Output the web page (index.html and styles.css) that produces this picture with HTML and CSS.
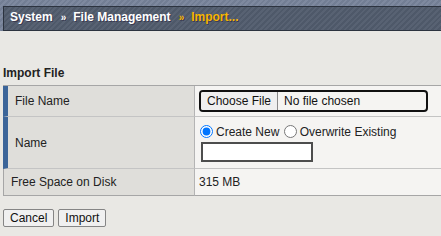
FILE: index.html
```html
<!DOCTYPE html>
<html lang="en">
<head>
    <meta charset="UTF-8">
    <title>Import File</title>
    <link rel="stylesheet" href="styles.css">
</head>
<body>
    <div class="masthead">
        <div class="crumbs">
            <span>System</span><span class="sep">»</span><span>File Management</span><span class="sep current">»</span><span class="current">Import...</span>
        </div>
    </div>

    <div class="content">
        <h2 class="section-title">Import File</h2>

        <table class="props">
            <tr>
                <td class="label required">File Name</td>
                <td class="value file-cell"><input type="file" class="file-input"></td>
            </tr>
            <tr>
                <td class="label required">Name</td>
                <td class="value name-cell">
                    <div class="radio-row">
                        <label><input type="radio" name="mode" checked>Create New</label>
                        <label><input type="radio" name="mode">Overwrite Existing</label>
                    </div>
                    <input type="text" class="text-input">
                </td>
            </tr>
            <tr>
                <td class="label">Free Space on Disk</td>
                <td class="value">315 MB</td>
            </tr>
        </table>

        <div class="actions">
            <button class="btn">Cancel</button>
            <button class="btn">Import</button>
        </div>
    </div>
</body>
</html>
```

FILE: styles.css
```css
html, body {
    margin: 0;
    padding: 0;
}
body {
    font-family: "Liberation Sans", Arial, sans-serif;
    font-size: 12px;
    color: #222;
    background-color: #e9e8e4;
}
.masthead {
    padding: 6px 0 0 3px;
    background-color: #77839a;
    background-image: repeating-linear-gradient(135deg, rgba(255,255,255,0.05) 0 2px, rgba(0,0,0,0.04) 2px 4px);
}
.crumbs {
    height: 20px;
    line-height: 20px;
    padding: 0 0 3px 6px;
    border-top: 1px solid #2c333f;
    border-bottom: 1px solid #2c333f;
    border-left: 1px solid #2c333f;
    background-color: #515c6d;
    background-image: repeating-linear-gradient(135deg, rgba(255,255,255,0.04) 0 2px, rgba(0,0,0,0.04) 2px 4px);
    color: #fff;
    font-weight: bold;
    white-space: nowrap;
    text-shadow: 1px 1px 0 rgba(40, 30, 60, 0.6);
}
.crumbs .sep {
    margin: 0 7px 0 8px;
    font-size: 10px;
}
.crumbs .current {
    color: #f6b500;
}
.content {
    padding-left: 3px;
}
.section-title {
    margin: 35px 0 5px;
    font-size: 12px;
    line-height: 14px;
    font-weight: bold;
    color: #222;
}
.props {
    width: 100%;
    border-collapse: separate;
    border-spacing: 0;
    border-top: 1px solid #a6a6a6;
}
.props td {
    box-sizing: border-box;
    border-bottom: 1px solid #c4c4c4;
    line-height: 14px;
}
.props tr:last-child td {
    border-bottom-color: #a6a6a6;
}
.label {
    width: 192px;
    padding: 6px 7px;
    background-color: #dfdeda;
    border-left: 1px solid #a6a6a6;
    border-right: 1px solid #b4b4b4;
    vertical-align: middle;
}
.label.required {
    border-left: 5px solid #3c6599;
}
.value {
    padding: 6px 4px;
    background-color: #f5f4f2;
}
.file-cell {
    padding-top: 4px;
    padding-bottom: 4px;
}
.file-input {
    box-sizing: border-box;
    width: 229px;
    height: 22px;
    margin: 0;
    padding: 0;
    border: 2px solid #111;
    border-radius: 4px;
    background: transparent;
    font: inherit;
    color: #111;
    vertical-align: top;
}
.file-input::file-selector-button {
    height: 18px;
    margin: 0 6px 0 0;
    padding: 0 6px;
    border: 0;
    border-right: 1px solid #8a8a8a;
    background-color: #efefef;
    font: inherit;
    color: #111;
}
.name-cell {
    padding-bottom: 6px;
}
.radio-row {
    height: 16px;
    margin-top: 1px;
    line-height: 16px;
    white-space: nowrap;
}
.radio-row input {
    width: 13px;
    height: 13px;
    margin: 0 3px 0 1px;
    vertical-align: -2px;
}
.text-input {
    display: block;
    box-sizing: border-box;
    width: 112px;
    height: 20px;
    margin: 2px 0 0 2px;
    padding: 1px 2px;
    border: 2px solid #4d4d4d;
    background: #fff;
    font: inherit;
}
.actions {
    margin-top: 13px;
    display: flex;
    gap: 4px;
}
.btn {
    box-sizing: border-box;
    height: 18px;
    padding: 0 6px;
    border: 1px solid #858585;
    border-radius: 2px;
    background-color: #f0f0f0;
    font: inherit;
    color: #111;
    line-height: 14px;
}
```
